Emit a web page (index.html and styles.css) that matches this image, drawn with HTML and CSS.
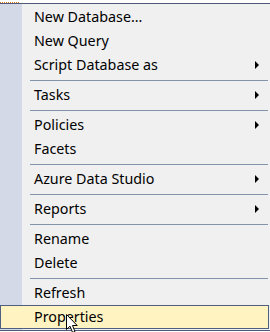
FILE: index.html
```html
<!DOCTYPE html>
<html lang="en">
<head>
  <meta charset="UTF-8">
  <title>Database context menu</title>
  <link rel="stylesheet" href="styles.css">
</head>
<body>
  <div class="topbar">
    <div class="focus-dots"></div>
  </div>

  <div class="menu">
    <div class="item">New Database...</div>
    <div class="item">New Query</div>
    <div class="item has-sub">Script Database as <span class="arrow"></span></div>
    <div class="sep"></div>
    <div class="item has-sub">Tasks <span class="arrow"></span></div>
    <div class="sep"></div>
    <div class="item has-sub">Policies <span class="arrow"></span></div>
    <div class="item">Facets</div>
    <div class="sep"></div>
    <div class="item has-sub">Azure Data Studio <span class="arrow"></span></div>
    <div class="sep"></div>
    <div class="item has-sub">Reports <span class="arrow"></span></div>
    <div class="sep"></div>
    <div class="item">Rename</div>
    <div class="item">Delete</div>
    <div class="sep"></div>
    <div class="item">Refresh</div>
    <div class="item active">Properties</div>
  </div>

  <!-- mouse pointer sitting over "Properties" -->
  <svg class="cursor" width="13" height="20" viewBox="0 0 13 20">
    <path d="M0.5 0.5 L0.5 15.5 L4 12.2 L6.6 18.5 L9 17.5 L6.5 11.5 L11.2 11.5 Z" fill="#fff" stroke="#000" stroke-width="1" stroke-linejoin="miter"/>
  </svg>
</body>
</html>
```

FILE: styles.css
```css
:root {
  --gutter: #d3d9e6;
  --face: #f0f0f0;
  --edge: #4d5a78;
  --rule: #8594ad;
  --hover: #fff3c2;
  --hover-edge: #4f5f80;
}

* {
  box-sizing: border-box;
  margin: 0;
  padding: 0;
}

body {
  width: 270px;
  height: 332px;
  overflow: hidden;
  background: #fff;
  font-family: 'Noto Sans', 'Liberation Sans', sans-serif;
  font-size: 14.3px;
  color: #000;
  position: relative;
}

.topbar {
  height: 3px;
}

.focus-dots {
  width: 19px;
  height: 3px;
  border-bottom: 1px dotted #e07a1c;
}

.menu {
  border-top: 1px solid var(--edge);
  border-bottom: 1px solid var(--edge);
  padding: 1px 0;
  background: linear-gradient(to right, var(--gutter) 22px, var(--face) 22px);
}

.item {
  height: 24px;
  line-height: 24px;
  padding-left: 34px;
  margin-right: 1px;
  display: flex;
  align-items: center;
  justify-content: space-between;
  white-space: nowrap;
}

.arrow {
  width: 0;
  height: 0;
  margin-right: 10px;
  border-left: 4px solid #000;
  border-top: 4px solid transparent;
  border-bottom: 4px solid transparent;
}

.item.active {
  background: var(--hover);
  border: 1px solid var(--hover-edge);
  padding-left: 33px;
}

.sep {
  height: 6px;
  padding-top: 3px;
  margin-left: 30px;
  margin-right: 2px;
}

.sep::before {
  content: "";
  display: block;
  height: 1px;
  background: var(--rule);
}

.cursor {
  position: absolute;
  left: 66px;
  top: 314px;
}
```
